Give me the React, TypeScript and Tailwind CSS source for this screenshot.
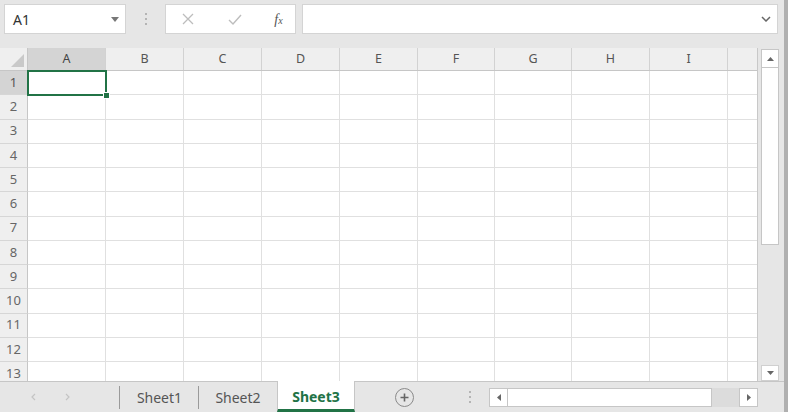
import React from "react";

const cols: { l: string; w: number }[] = [
  { l: "A", w: 78 },
  { l: "B", w: 78 },
  { l: "C", w: 78 },
  { l: "D", w: 78 },
  { l: "E", w: 78 },
  { l: "F", w: 77 },
  { l: "G", w: 77 },
  { l: "H", w: 78 },
  { l: "I", w: 78 },
  { l: "", w: 30 },
];

const rows = Array.from({ length: 13 }, (_, i) => i + 1);

function Dots() {
  return (
    <div className="flex flex-col gap-[3px] items-center">
      <div className="w-[2px] h-[2px] bg-[#b4b4b4]" />
      <div className="w-[2px] h-[2px] bg-[#b4b4b4]" />
      <div className="w-[2px] h-[2px] bg-[#b4b4b4]" />
    </div>
  );
}

export default function App() {
  return (
    <div
      className="w-[788px] h-[412px] bg-[#e6e6e6] flex flex-col overflow-hidden border-r-[4px] border-[#b0b0b0] text-[#444]"
      style={{ fontFamily: '"Segoe UI", "Noto Sans", "Open Sans", sans-serif' }}
    >
      {/* Toolbar */}
      <div className="h-[48px] shrink-0 flex items-start pt-[4px] pl-[4px] pr-[6px]">
        <div className="w-[122px] h-[30px] bg-white border border-[#d4d4d4] flex items-center justify-between pl-[8px] pr-[6px]">
          <span className="text-[14px] text-[#333]">A1</span>
          <svg width="8" height="5" viewBox="0 0 8 5">
            <path d="M0 0 L8 0 L4 5 Z" fill="#777" />
          </svg>
        </div>
        <div className="w-[39px] h-[30px] flex items-center justify-center">
          <Dots />
        </div>
        <div className="w-[131px] h-[30px] bg-white border border-[#d4d4d4] flex items-center">
          <div className="w-[40px] flex justify-center ml-[2px]">
            <svg width="12" height="12" viewBox="0 0 12 12">
              <path d="M1 1 L11 11 M11 1 L1 11" stroke="#bdbdbd" strokeWidth="1.3" />
            </svg>
          </div>
          <div className="w-[54px] flex justify-center">
            <svg width="14" height="11" viewBox="0 0 14 11">
              <path d="M1 6 L5 10 L13 1" stroke="#bdbdbd" strokeWidth="1.4" fill="none" />
            </svg>
          </div>
          <div className="flex-1 flex justify-center">
            <span
              className="text-[14px] italic text-[#555]"
              style={{ fontFamily: '"Liberation Serif", "DejaVu Serif", serif' }}
            >
              f<span className="text-[10px]">x</span>
            </span>
          </div>
        </div>
        <div className="ml-[6px] flex-1 h-[30px] bg-white border border-[#d4d4d4] flex items-center justify-end pr-[6px]">
          <svg width="10" height="6" viewBox="0 0 10 6">
            <path d="M1 1 L5 5 L9 1" stroke="#666" strokeWidth="1.5" fill="none" />
          </svg>
        </div>
      </div>

      {/* Grid + vertical scroll */}
      <div className="h-[333px] shrink-0 flex">
        <div className="w-[758px] h-full bg-white relative overflow-hidden border-r border-[#c8c8c8]">
          {/* header row */}
          <div className="flex h-[23px] bg-[#efefef] border-b border-[#c6c6c6]">
            <div className="w-[28px] h-full shrink-0 border-r border-[#c6c6c6] relative">
              <svg className="absolute right-[3px] bottom-[3px]" width="13" height="13" viewBox="0 0 13 13">
                <path d="M13 0 L13 13 L0 13 Z" fill="#c9c9c9" />
              </svg>
            </div>
            {cols.map((c, i) => (
              <div
                key={i}
                style={{ width: c.w }}
                className={`h-full shrink-0 flex items-center justify-center text-[12.5px] border-r border-[#d2d2d2] ${
                  i === 0 ? "bg-[#d4d4d4] text-[#444]" : "text-[#555]"
                }`}
              >
                {c.l}
              </div>
            ))}
          </div>
          {rows.map((r) => (
            <div key={r} className="flex h-[24.25px]">
              <div
                className={`w-[28px] h-full shrink-0 border-r border-[#c6c6c6] border-b border-b-[#d6d6d6] flex items-center justify-center text-[13px] ${
                  r === 1 ? "bg-[#d4d4d4] text-[#555]" : "bg-[#efefef] text-[#666]"
                }`}
              >
                {r}
              </div>
              {cols.map((c, i) => (
                <div
                  key={i}
                  style={{ width: c.w }}
                  className="h-full shrink-0 border-r border-b border-[#e0e0e0]"
                />
              ))}
            </div>
          ))}
          {/* selection */}
          <div className="absolute left-[27px] top-[22px] w-[80px] h-[26px] border-2 border-[#217346]" />
          <div className="absolute left-[103px] top-[44px] w-[7px] h-[7px] bg-[#217346] border border-white" />
        </div>
        <div className="ml-[3px] w-[18px] h-full flex flex-col pt-[1px]">
          <div className="h-[19px] bg-white border border-[#c6c6c6] flex items-center justify-center">
            <svg width="7" height="4" viewBox="0 0 7 4">
              <path d="M0 4 L7 4 L3.5 0 Z" fill="#666" />
            </svg>
          </div>
          <div className="h-[177px] bg-white border border-[#c6c6c6] border-t-0" />
          <div className="flex-1" />
          <div className="h-[16px] bg-white border border-[#d0d0d0] flex items-center justify-center">
            <svg width="7" height="4" viewBox="0 0 7 4">
              <path d="M0 0 L7 0 L3.5 4 Z" fill="#666" />
            </svg>
          </div>
        </div>
      </div>

      {/* Tab bar */}
      <div className="h-[31px] shrink-0 flex">
        <div className="w-[120px] h-full border-t border-[#c6c6c6] flex items-center relative">
          <svg className="ml-[31px]" width="5" height="8" viewBox="0 0 5 8">
            <path d="M4 1 L1 4 L4 7" stroke="#c4c4c4" strokeWidth="1.2" fill="none" />
          </svg>
          <svg className="ml-[29px]" width="5" height="8" viewBox="0 0 5 8">
            <path d="M1 1 L4 4 L1 7" stroke="#c4c4c4" strokeWidth="1.2" fill="none" />
          </svg>
          <div className="absolute right-0 top-[4px] h-[23px] w-px bg-[#9a9a9a]" />
        </div>
        <div className="w-[79px] h-full border-t border-[#c6c6c6] flex items-center justify-center text-[14px] text-[#555] relative">
          Sheet1
          <div className="absolute right-0 top-[4px] h-[23px] w-px bg-[#9a9a9a]" />
        </div>
        <div className="w-[78px] h-full border-t border-[#c6c6c6] flex items-center justify-center text-[14px] text-[#555]">
          Sheet2
        </div>
        <div className="w-[78px] h-full bg-white border-x border-[#c6c6c6] border-b-[3px] border-b-[#217346] flex items-center justify-center text-[14px] font-bold text-[#217346] pt-[2px]">
          Sheet3
        </div>
        <div className="flex-1 h-full border-t border-[#c6c6c6] flex items-center">
          <div className="ml-[40px] w-[19px] h-[19px] rounded-full border border-[#8a8a8a] flex items-center justify-center">
            <svg width="9" height="9" viewBox="0 0 9 9">
              <path d="M4.5 0.5 V8.5 M0.5 4.5 H8.5" stroke="#666" strokeWidth="1.6" />
            </svg>
          </div>
          <div className="ml-[55px]">
            <Dots />
          </div>
          <div className="ml-[18px] flex h-[19px]">
            <div className="w-[19px] h-full bg-white border border-[#c6c6c6] flex items-center justify-center">
              <svg width="4" height="7" viewBox="0 0 4 7">
                <path d="M4 0 L4 7 L0 3.5 Z" fill="#666" />
              </svg>
            </div>
            <div className="w-[204px] h-full bg-white border border-[#c6c6c6] border-l-0" />
            <div className="w-[27px] h-full bg-[#dcdcdc]" />
            <div className="w-[19px] h-full bg-white border border-[#c6c6c6] flex items-center justify-center">
              <svg width="4" height="7" viewBox="0 0 4 7">
                <path d="M0 0 L0 7 L4 3.5 Z" fill="#666" />
              </svg>
            </div>
          </div>
        </div>
      </div>
    </div>
  );
}
